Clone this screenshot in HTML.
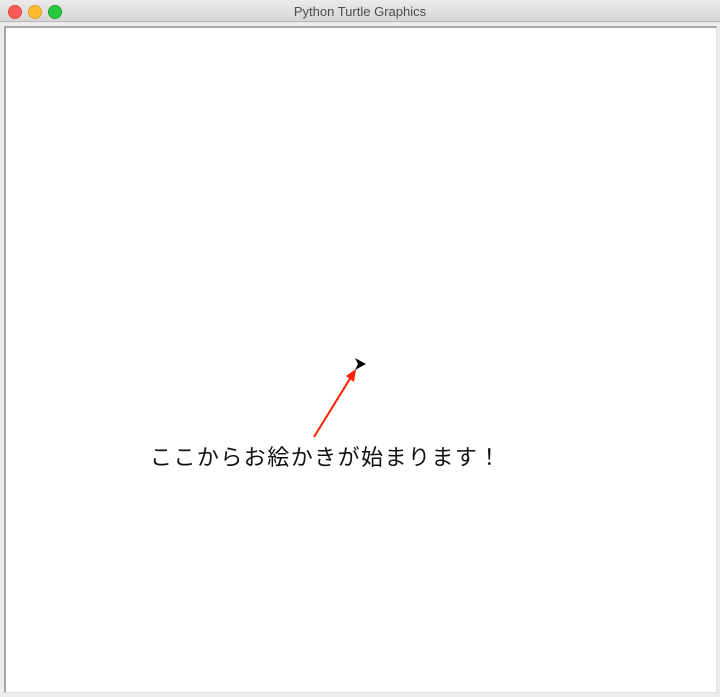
<!DOCTYPE html>
<html><head><meta charset="utf-8"><style>
html,body{margin:0;padding:0;width:720px;height:697px;overflow:hidden;background:#ececec;font-family:"Liberation Sans","Noto Sans CJK JP",sans-serif}
.tb{position:absolute;left:0;top:0;width:720px;height:22px;background:linear-gradient(#ebebeb,#d6d6d6);border-bottom:1px solid #b5b5b5;box-sizing:border-box}
.tb .t{position:absolute;left:0;right:0;top:4px;text-align:center;font-size:13px;color:#4d4d4d}
.dot{position:absolute;top:5px;width:12px;height:12px;border-radius:50%}
.cv{position:absolute;left:4px;top:26px;width:713px;height:667px;background:#fff;border-top:2px solid #a6a6a6;border-left:2px solid #a6a6a6;border-right:1px solid #e0e0e0;border-bottom:1px solid #e0e0e0;box-sizing:border-box}
.txt{position:absolute;left:150px;top:440px;font-size:22px;letter-spacing:1.45px;color:#111;white-space:nowrap;font-family:"Noto Sans CJK JP",sans-serif}
</style></head><body>
<div class="tb"><div class="dot" style="left:8px;background:#fc5b57;border:0.5px solid #de4a45"></div><div class="dot" style="left:28px;background:#fdbc2e;border:0.5px solid #dea123"></div><div class="dot" style="left:48px;background:#28c840;border:0.5px solid #1ea934"></div><div class="t">Python Turtle Graphics</div></div>
<div class="cv"></div>
<svg width="720" height="697" style="position:absolute;left:0;top:0">
<line x1="314" y1="437" x2="351" y2="377" stroke="#ff2000" stroke-width="2"/>
<polygon points="356,369 354,382 346,376" fill="#ff2000"/>
<polygon points="366,364 355,358 358,364 355,370" fill="#000"/>
</svg>
<div class="txt">ここからお絵かきが始まります！</div>
</body></html>
